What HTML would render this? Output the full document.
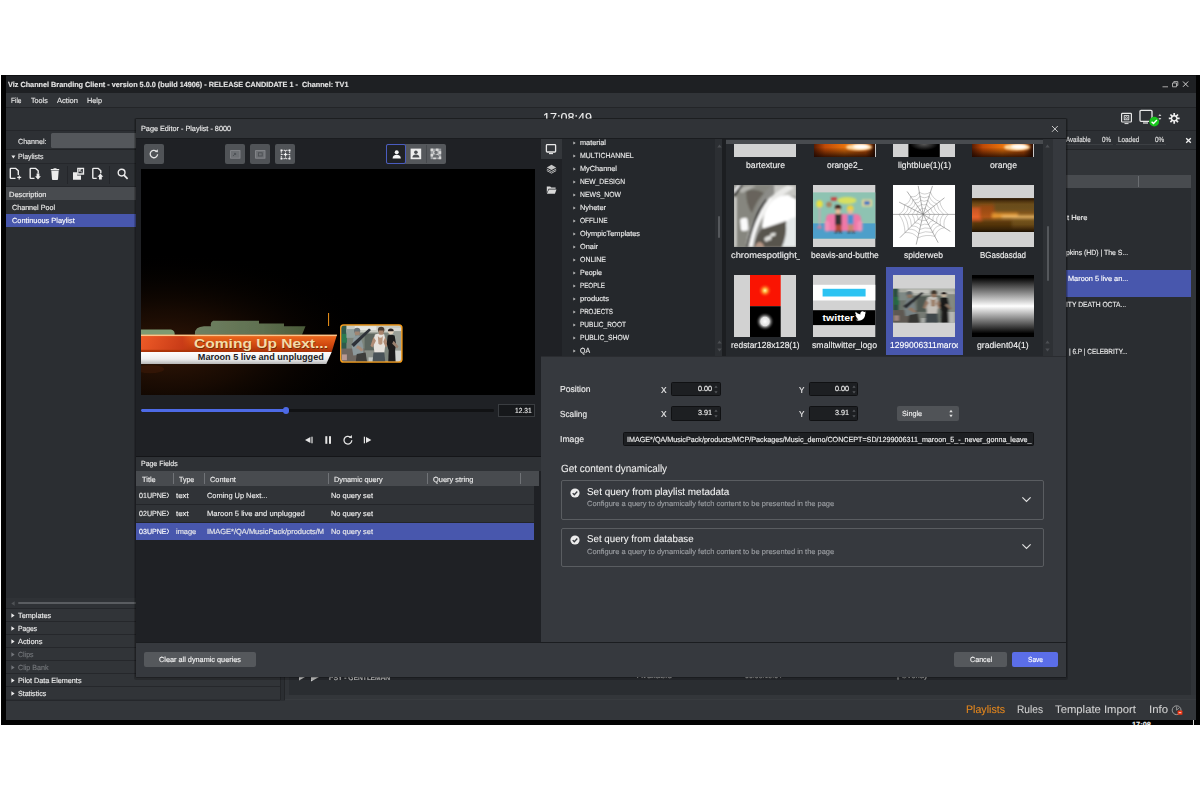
<!DOCTYPE html>
<html><head><meta charset="utf-8"><title>Page Editor</title>
<style>
*{box-sizing:border-box;margin:0;padding:0}
html,body{width:1200px;height:800px;overflow:hidden;background:#fff}
body{font-family:"Liberation Sans",sans-serif;font-size:7.4px;color:#e6e6e6;position:relative}
.a{position:absolute}
.t{position:absolute;white-space:nowrap;line-height:14px;height:14px;transform-origin:0 50%;-webkit-text-stroke:0.13px currentColor;text-rendering:geometricPrecision}
.c{position:absolute;overflow:hidden}
svg{position:absolute;overflow:hidden}
</style></head><body>
<div class="a" style="left:1px;top:75px;width:1199px;height:649.5px;background:#020202;"></div>
<div class="a" style="left:6px;top:75px;width:1190px;height:645px;background:#2b2e32;"></div>
<div class="a" style="left:6px;top:75px;width:1190px;height:18.3px;background:#1e2023;"></div>
<div class="a" style="left:6px;top:75px;width:1190px;height:0.8px;background:#101113;"></div>
<span class="t" style="left:8.3px;top:77.8px;font-size:7.4px;color:#e4e4e4;font-weight:bold;transform:scaleX(0.9842);white-space:pre;">Viz Channel Branding Client - version 5.0.0 (build 14906) - RELEASE CANDIDATE 1 -  Channel: TV1</span>
<svg style="left:1160px;top:79px" width="32" height="10" viewBox="0 0 32 10"><g fill="none" stroke="#b8b8b8" stroke-width="0.9"><path d="M2.5 7.8h5.5"/><path d="M12.5 4h4v3.8h-4z M13.8 4V2.6h4v3.8h-1.3"/><path d="M23 2.5l5.2 5.3M28.2 2.5L23 7.8" stroke="#d0d0d0" stroke-width="1"/></g></svg>
<div class="a" style="left:6px;top:93.3px;width:1190px;height:14.0px;background:#313438;"></div>
<span class="t" style="left:10.5px;top:94.25px;font-size:7.4px;color:#e6e6e6;transform:scaleX(0.8807);">File</span>
<span class="t" style="left:30.75px;top:94.25px;font-size:7.4px;color:#e6e6e6;transform:scaleX(0.9701);">Tools</span>
<span class="t" style="left:56.75px;top:94.25px;font-size:7.4px;color:#e6e6e6;transform:scaleX(1.0221);">Action</span>
<span class="t" style="left:87px;top:94.25px;font-size:7.4px;color:#e6e6e6;transform:scaleX(0.9866);">Help</span>
<div class="a" style="left:6px;top:107.3px;width:1190px;height:0.8px;background:#232528;"></div>
<div class="a" style="left:6px;top:108.1px;width:1190px;height:22.7px;background:#2d3034;"></div>
<span class="t" style="left:543px;top:110.7px;font-size:13px;color:#f0f0f0;-webkit-text-stroke:0.08px currentColor;transform:scaleX(0.9682);">17:08:49</span>
<svg style="left:1119px;top:109px" width="64" height="18" viewBox="0 0 64 18"><g fill="none" stroke="#e8e8e8" stroke-width="1.2"><rect x="2.6" y="4.4" width="9.8" height="8.6" rx="0.8"/><rect x="5.2" y="6.6" width="4.6" height="4.2" stroke-width="0.9"/><circle cx="7.5" cy="8.7" r="1" stroke-width="0.8"/><path d="M5.5 14.6h4" stroke-width="1"/></g><g fill="none" stroke="#e8e8e8" stroke-width="1.3"><path d="M33 10.5V2.3a1 1 0 0 0-1-1H22a1 1 0 0 0-1 1v9a1 1 0 0 0 1 1h8"/><path d="M24 14h5" stroke-width="1.2"/></g><circle cx="35.2" cy="12.6" r="4.9" fill="#17c41c"/><path d="M32.6 12.7l1.9 1.9 3.4-3.6" fill="none" stroke="#fff" stroke-width="1.4"/><path d="M39.4 7l1.5-2 1.5 2z M39.4 9l1.5 2 1.5-2z" fill="#c8c8c8"/><g transform="translate(55.2 9.3)"><g stroke="#f0f0f0" stroke-width="1.7"><path d="M0-5.4V5.4M-5.4 0H5.4M-3.8-3.8L3.8 3.8M-3.8 3.8L3.8-3.8"/></g><circle r="3.3" fill="#f0f0f0"/><circle r="1.9" fill="#2d3034"/></g></svg>
<div class="a" style="left:6px;top:130.8px;width:1190px;height:18.5px;background:#2d3034;"></div>
<div class="a" style="left:6px;top:130.4px;width:1190px;height:0.8px;background:#24262a;"></div>
<span class="t" style="left:17.5px;top:134.5px;font-size:7.4px;color:#e6e6e6;transform:scaleX(0.9630);">Channel:</span>
<div class="a" style="left:51px;top:133px;width:233px;height:14.8px;background:#54575b;border-radius:1.5px;"></div>
<div class="a" style="left:1060px;top:144.2px;width:53px;height:0.8px;background:#3c3f43;"></div>
<div class="a" style="left:1116px;top:144.2px;width:50px;height:0.8px;background:#3c3f43;"></div>
<span class="t" style="left:1066.3px;top:132.5px;font-size:7.4px;color:#e0e0e0;transform:scaleX(0.8272);">Available</span>
<span class="t" style="left:1102px;top:132.8px;font-size:7.4px;color:#e0e0e0;transform:scaleX(0.8421);">0%</span>
<span class="t" style="left:1117.5px;top:132.5px;font-size:7.4px;color:#e0e0e0;transform:scaleX(0.8593);">Loaded</span>
<span class="t" style="left:1154.7px;top:132.8px;font-size:7.4px;color:#e0e0e0;transform:scaleX(0.8702);">0%</span>
<svg style="left:1185px;top:137px" width="7" height="7" viewBox="0 0 7 7"><path d="M1.2 1.2l4.6 4.6M5.8 1.2L1.2 5.8" stroke="#f0f0f0" stroke-width="1.3" fill="none"/></svg>
<div class="a" style="left:6px;top:149.3px;width:1190px;height:0.8px;background:#222427;"></div>
<div class="a" style="left:6px;top:150.1px;width:274px;height:13.3px;background:#2f3236;"></div>
<svg style="left:10.5px;top:154.5px" width="5" height="4" viewBox="0 0 5 4"><path d="M0.4 0.6h4L2.4 3.6z" fill="#e8e8e8"/></svg>
<span class="t" style="left:17.5px;top:150.25px;font-size:7.4px;color:#e6e6e6;transform:scaleX(0.9406);">Playlists</span>
<div class="a" style="left:6px;top:163.4px;width:274px;height:0.8px;background:#25272b;"></div>
<div class="a" style="left:6px;top:164.2px;width:274px;height:21.4px;background:#2d3034;"></div>
<svg style="left:8px;top:166.400px" width="126" height="16" viewBox="0 0 126 16">
<g fill="none" stroke="#ececec" stroke-width="1.4" stroke-linejoin="round">
<path d="M10.3 9V4.8L7.8 2.4H3a.7.7 0 0 0-.7.7v8.6a.7.7 0 0 0 .7.7h4.5"/>
<path d="M30.2 7.5V4.8L27.7 2.4H22.9a.7.7 0 0 0-.7.7v8.6a.7.7 0 0 0 .7.7h3.6"/>
<path d="M92.8 7.2V4.8L90.3 2.4H85.5a.7.7 0 0 0-.7.7v8.6a.7.7 0 0 0 .7.7h3.2"/>
</g>
<path d="M10.6 9.4v1.4H9.2v1.2h1.4v1.4h1.2V12h1.4v-1.2h-1.4V9.4z" fill="#ececec"/>
<path d="M28.6 7.6h2.8v2.7h1.5l-2.9 3.2-2.9-3.2h1.5z" fill="#ececec"/>
<path d="M91 13.4h2.8v-2.7h1.5l-2.9-3.2-2.9 3.2H91z" fill="#ececec"/>
<path d="M43.300 4.800h7.400l-.7 8.400a.8.8 0 0 1-.8.700h-4.400a.8.800 0 0 1-.8-.700z M42.800 3.100h8.400v1.100h-8.400z M45.500 2.300h3v1h-3z" fill="#ececec"/>
<path d="M65 6.2h4.2v3.3H73v4.2h-8z" fill="#ececec"/>
<path d="M69.8 2.3h5.7v5.7h-5.7z" fill="none" stroke="#ececec" stroke-width="1.3"/>
<path d="M71.2 3.7h2.2M71.2 3.7v2.2M71.2 3.7l2.9 2.9" stroke="#ececec" stroke-width="0.9" fill="none"/>
<circle cx="113.6" cy="6.6" r="3.4" fill="none" stroke="#ececec" stroke-width="1.4"/><path d="M116 9.2l3.6 3.7" stroke="#ececec" stroke-width="1.7" fill="none"/>
</svg>
<div class="a" style="left:66.5px;top:165.5px;width:0.7px;height:18.5px;background:#24262a;"></div>
<div class="a" style="left:109px;top:165.5px;width:0.7px;height:18.5px;background:#24262a;"></div>
<div class="a" style="left:6px;top:185.6px;width:274px;height:1.0px;background:#25272b;"></div>
<div class="a" style="left:6px;top:186.6px;width:274px;height:13.4px;background:#484b4f;"></div>
<span class="t" style="left:8.5px;top:187.5px;font-size:7.4px;color:#ececec;transform:scaleX(1.0144);">Description</span>
<div class="a" style="left:6px;top:200px;width:274px;height:13.7px;background:#2d3034;"></div>
<span class="t" style="left:12px;top:201.0px;font-size:7.4px;color:#ececec;transform:scaleX(0.9687);">Channel Pool</span>
<div class="a" style="left:6px;top:214px;width:274px;height:12.6px;background:#4857ad;"></div>
<span class="t" style="left:12px;top:214.1px;font-size:7.4px;color:#ffffff;transform:scaleX(0.9975);">Continuous Playlist</span>
<div class="a" style="left:6px;top:226.6px;width:274px;height:371.4px;background:#2b2e32;"></div>
<div class="a" style="left:6px;top:598px;width:274px;height:9.5px;background:#2f3236;"></div>
<svg style="left:10.5px;top:600.5px" width="4" height="5" viewBox="0 0 4 5"><path d="M3.6 0.3v4.4L0.3 2.5z" fill="#505357"/></svg>
<div class="a" style="left:18px;top:601.8px;width:252px;height:2.2px;background:#5a5d61;border-radius:1px;"></div>
<div class="a" style="left:6px;top:607.6px;width:274px;height:1.0px;background:#25272b;"></div>
<div class="a" style="left:6px;top:608.6px;width:274px;height:12.1px;background:#313438;"></div>
<svg style="left:10.6px;top:612.6px" width="4" height="5" viewBox="0 0 4 5"><path d="M0.4 0.3v4.4l3.2-2.2z" fill="#ececec"/></svg>
<span class="t" style="left:17.5px;top:608.5px;font-size:7.4px;color:#ececec;transform:scaleX(0.9870);">Templates</span>
<div class="a" style="left:6px;top:620.62px;width:274px;height:1.0px;background:#25272b;"></div>
<div class="a" style="left:6px;top:621.62px;width:274px;height:12.1px;background:#313438;"></div>
<svg style="left:10.6px;top:625.6px" width="4" height="5" viewBox="0 0 4 5"><path d="M0.4 0.3v4.4l3.2-2.2z" fill="#ececec"/></svg>
<span class="t" style="left:17.5px;top:621.5px;font-size:7.4px;color:#ececec;transform:scaleX(0.9180);">Pages</span>
<div class="a" style="left:6px;top:633.64px;width:274px;height:1.0px;background:#25272b;"></div>
<div class="a" style="left:6px;top:634.64px;width:274px;height:12.1px;background:#313438;"></div>
<svg style="left:10.6px;top:638.6px" width="4" height="5" viewBox="0 0 4 5"><path d="M0.4 0.3v4.4l3.2-2.2z" fill="#ececec"/></svg>
<span class="t" style="left:17.5px;top:634.5px;font-size:7.4px;color:#ececec;transform:scaleX(1.0103);">Actions</span>
<div class="a" style="left:6px;top:646.6600000000001px;width:274px;height:1.0px;background:#25272b;"></div>
<div class="a" style="left:6px;top:647.6600000000001px;width:274px;height:12.1px;background:#313438;"></div>
<svg style="left:10.6px;top:651.6px" width="4" height="5" viewBox="0 0 4 5"><path d="M0.4 0.3v4.4l3.2-2.2z" fill="#74777b"/></svg>
<span class="t" style="left:17.5px;top:647.5px;font-size:7.4px;color:#74777b;transform:scaleX(0.9430);">Clips</span>
<div class="a" style="left:6px;top:659.6800000000001px;width:274px;height:1.0px;background:#25272b;"></div>
<div class="a" style="left:6px;top:660.6800000000001px;width:274px;height:12.1px;background:#313438;"></div>
<svg style="left:10.6px;top:664.6px" width="4" height="5" viewBox="0 0 4 5"><path d="M0.4 0.3v4.4l3.2-2.2z" fill="#74777b"/></svg>
<span class="t" style="left:17.5px;top:660.5px;font-size:7.4px;color:#74777b;transform:scaleX(0.9640);">Clip Bank</span>
<div class="a" style="left:6px;top:672.7px;width:274px;height:1.0px;background:#25272b;"></div>
<div class="a" style="left:6px;top:673.7px;width:274px;height:12.1px;background:#313438;"></div>
<svg style="left:10.6px;top:677.6px" width="4" height="5" viewBox="0 0 4 5"><path d="M0.4 0.3v4.4l3.2-2.2z" fill="#ececec"/></svg>
<span class="t" style="left:17.5px;top:673.5px;font-size:7.4px;color:#ececec;transform:scaleX(0.9783);">Pilot Data Elements</span>
<div class="a" style="left:6px;top:685.72px;width:274px;height:1.0px;background:#25272b;"></div>
<div class="a" style="left:6px;top:686.72px;width:274px;height:12.1px;background:#313438;"></div>
<svg style="left:10.6px;top:690.6px" width="4" height="5" viewBox="0 0 4 5"><path d="M0.4 0.3v4.4l3.2-2.2z" fill="#ececec"/></svg>
<span class="t" style="left:17.5px;top:686.5px;font-size:7.4px;color:#ececec;transform:scaleX(0.9551);">Statistics</span>
<div class="a" style="left:6px;top:699.8px;width:274px;height:0.8px;background:#25272b;"></div>
<div class="a" style="left:280px;top:150.1px;width:1px;height:549.9px;background:#232528;"></div>
<div class="a" style="left:284px;top:150.1px;width:1px;height:549.9px;background:#232528;"></div>
<div class="a" style="left:285px;top:150.1px;width:911px;height:544.9px;background:#313438;"></div>
<div class="a" style="left:289px;top:174.5px;width:901.5px;height:520.3px;background:#2a2d31;"></div>
<div class="a" style="left:289px;top:174.5px;width:901.5px;height:13.5px;background:#484b4f;"></div>
<div class="a" style="left:1137.6px;top:176px;width:1.0px;height:11px;background:#6a6d71;"></div>
<div class="a" style="left:1066px;top:270px;width:124.5px;height:26.6px;background:#4857ad;"></div>
<span class="t" style="left:1066.5px;top:210.5px;font-size:7.4px;color:#ececec;transform:scaleX(1.0178);">t Here</span>
<span class="t" style="left:1066.3px;top:245.5px;font-size:7.4px;color:#ececec;transform:scaleX(0.9327);">pkins (HD) | The S...</span>
<span class="t" style="left:1067.6px;top:271.5px;font-size:7.4px;color:#ffffff;transform:scaleX(0.9932);">Maroon 5 live an...</span>
<span class="t" style="left:1066.3px;top:297.5px;font-size:7.4px;color:#ececec;transform:scaleX(0.9104);">ITY DEATH OCTA...</span>
<span class="t" style="left:1068.5px;top:344.5px;font-size:7.4px;color:#ececec;transform:scaleX(0.8699);">| 6.P | CELEBRITY...</span>
<svg style="left:298px;top:672px" width="24" height="10" viewBox="0 0 24 10"><path d="M1 1.5v7l6-3.5z M13 0.5v9l8-4.5z" fill="#d0d0d0"/></svg>
<span class="t" style="left:329px;top:670.5px;font-size:7.4px;color:#e0e0e0;transform:scaleX(0.9075);">PSY - GENTLEMAN</span>
<span class="t" style="left:637px;top:669.0px;font-size:7.4px;color:#c8c8c8;transform:scaleX(1.1722);">Available</span>
<span class="t" style="left:745px;top:669.0px;font-size:7.4px;color:#c8c8c8;transform:scaleX(0.9476);">00:03:15:04</span>
<span class="t" style="left:897px;top:669.0px;font-size:7.4px;color:#c8c8c8;transform:scaleX(1.0531);">| Overlay</span>
<div class="a" style="left:285px;top:695px;width:911px;height:25px;background:#33363a;"></div>
<div class="a" style="left:6px;top:700.6px;width:279px;height:19.4px;background:#33363a;"></div>
<div class="a" style="left:285px;top:699px;width:911px;height:0.8px;background:#383b3f;"></div>
<span class="t" style="left:966px;top:702.5px;font-size:11px;color:#e5871d;-webkit-text-stroke:0.08px currentColor;transform:scaleX(0.9667);">Playlists</span>
<span class="t" style="left:1017px;top:702.5px;font-size:11px;color:#d0d0d0;-webkit-text-stroke:0.08px currentColor;transform:scaleX(0.9244);">Rules</span>
<span class="t" style="left:1055px;top:702.5px;font-size:11px;color:#d0d0d0;-webkit-text-stroke:0.08px currentColor;transform:scaleX(1.0269);">Template Import</span>
<span class="t" style="left:1149px;top:702.5px;font-size:11px;color:#d0d0d0;-webkit-text-stroke:0.08px currentColor;transform:scaleX(1.0349);">Info</span>
<svg style="left:1170.5px;top:703.5px" width="13" height="13" viewBox="0 0 13 13"><circle cx="5.6" cy="6.2" r="4.4" fill="none" stroke="#a8a8a8" stroke-width="0.9"/><path d="M5.6 6.2V2.4M5.6 6.2l2.6-2.4" stroke="#a8a8a8" stroke-width="0.8" fill="none"/><rect x="6.6" y="6.6" width="4.8" height="4.2" rx="0.6" fill="#ee3311"/><path d="M7.7 8.7h2.6" stroke="#fff" stroke-width="0.8"/></svg>
<div class="a" style="left:1193.2px;top:720px;width:0.8px;height:4.5px;background:#d8d8d8;"></div>
<div class="c" style="left:1124px;top:720px;width:40px;height:4.5px"><span class="t" style="left:8px;top:-2.5px;font-size:7.4px;font-weight:bold;color:#f0f0f0">17:08</span></div>
<div class="a" style="left:134px;top:117.5px;width:934px;height:562.0px;background:rgba(0,0,0,0.18);border-radius:2px;"></div>
<div class="a" style="left:135px;top:118.3px;width:932px;height:560.0px;background:rgba(0,0,0,0.22);border-radius:2px;"></div>
<div class="a" style="left:136px;top:119px;width:930px;height:558px;background:#36393e;"></div>
<div class="a" style="left:136px;top:119px;width:930px;height:19px;background:#303337;"></div>
<span class="t" style="left:141px;top:121.5px;font-size:7.4px;color:#ececec;transform:scaleX(0.9824);">Page Editor - Playlist - 8000</span>
<svg style="left:1050px;top:124px" width="10" height="10" viewBox="0 0 10 10"><path d="M2 2l5.8 5.8M7.8 2L2 7.8" stroke="#d8d8d8" stroke-width="0.9" fill="none"/></svg>
<div class="a" style="left:136px;top:138px;width:930px;height:1px;background:#1a1c1f;"></div>
<div class="a" style="left:136px;top:139px;width:405px;height:503px;background:#1f2125;"></div>
<div class="a" style="left:143.5px;top:144px;width:20.0px;height:20px;background:#505357;border-radius:2px;"></div>
<svg style="left:147.5px;top:148px" width="12" height="12" viewBox="0 0 12 12"><path d="M9.6 6.2A3.7 3.7 0 1 1 8.3 3.2" fill="none" stroke="#e4e4e4" stroke-width="1.3"/><path d="M6.8 3.9L9.9 4.3L9.7 1.2z" fill="#e4e4e4"/></svg>
<div class="a" style="left:225.2px;top:144px;width:20.0px;height:20px;background:#505357;border-radius:2px;"></div>
<div class="a" style="left:250px;top:144px;width:20px;height:20px;background:#505357;border-radius:2px;"></div>
<div class="a" style="left:275px;top:144px;width:20px;height:20px;background:#505357;border-radius:2px;"></div>
<svg style="left:230px;top:149.5px" width="11" height="9" viewBox="0 0 11 9"><rect x="0.6" y="0.6" width="9.4" height="7.6" fill="#6d7074" stroke="#8a8d91" stroke-width="0.8"/><path d="M3 6l2.2-2.3M4 3.4h1.6v1.6" stroke="#4b4e52" stroke-width="0.9" fill="none"/></svg>
<svg style="left:254.8px;top:149.5px" width="11" height="9" viewBox="0 0 11 9"><rect x="0.6" y="0.6" width="9.4" height="7.6" fill="#6d7074" stroke="#8a8d91" stroke-width="0.8"/><rect x="3.4" y="2.8" width="3.8" height="3.2" fill="none" stroke="#4b4e52" stroke-width="0.9"/></svg>
<svg style="left:279.6px;top:148.6px" width="11" height="11" viewBox="0 0 11 11"><g stroke="#f2f2f2" stroke-width="1" fill="none" stroke-dasharray="1.4 1"><path d="M1.3 1.3h8.4v8.4H1.3z"/><path d="M1.3 5.5h8.4M5.5 1.3v8.4"/></g><g fill="#f2f2f2"><rect x="0.5" y="0.5" width="1.8" height="1.8"/><rect x="8.7" y="0.5" width="1.8" height="1.8"/><rect x="0.5" y="8.7" width="1.8" height="1.8"/><rect x="8.7" y="8.7" width="1.8" height="1.8"/><rect x="4.6" y="4.6" width="1.8" height="1.8"/></g></svg>
<div class="a" style="left:386px;top:144px;width:59.5px;height:20px;background:#55585c;border-radius:2px;"></div>
<div class="a" style="left:386px;top:144px;width:20.2px;height:20px;background:#1f2125;border:1px solid #4a5cc0;border-radius:2px;"></div>
<div class="a" style="left:425.6px;top:145px;width:0.6px;height:18px;background:#46494d;"></div>
<svg style="left:390.5px;top:148.5px" width="12" height="11" viewBox="0 0 12 11"><circle cx="5.7" cy="3.2" r="2" fill="#f4f4f4"/><path d="M1.6 9.6c0-2.6 1.6-3.8 4.1-3.8s4.1 1.2 4.1 3.8z" fill="#f4f4f4"/></svg>
<svg style="left:410px;top:148px" width="12" height="12" viewBox="0 0 12 12"><rect x="0.6" y="0.6" width="10.6" height="10.6" fill="#ececec"/><circle cx="5.9" cy="4.2" r="1.8" fill="#4a4d51"/><path d="M2.4 9.6c0-2.2 1.4-3.2 3.5-3.2s3.5 1 3.5 3.2z" fill="#4a4d51"/></svg>
<svg style="left:430px;top:148px" width="12" height="12" viewBox="0 0 12 12"><rect x="0.6" y="0.6" width="10.6" height="10.6" fill="#9a9da1"/><g fill="#d8d8d8"><rect x="0.6" y="0.6" width="2.6" height="2.6"/><rect x="5.9" y="0.6" width="2.6" height="2.6"/><rect x="3.2" y="3.2" width="2.7" height="2.7"/><rect x="8.5" y="3.2" width="2.7" height="2.7"/><rect x="0.6" y="5.9" width="2.6" height="2.6"/><rect x="5.9" y="5.9" width="2.6" height="2.6"/><rect x="3.2" y="8.5" width="2.7" height="2.7"/><rect x="8.5" y="8.5" width="2.7" height="2.7"/></g><circle cx="5.9" cy="4.4" r="1.6" fill="#6a6d71"/><path d="M2.8 9.4c0-2 1.2-2.8 3.1-2.8s3.1.8 3.1 2.8z" fill="#6a6d71"/></svg>
<div class="a" style="left:141px;top:168.8px;width:394px;height:226.2px;background:#000;"></div>
<svg style="left:141px;top:168.8px" width="394" height="226.2" viewBox="141 168.8 394 226.2">
<defs>
<radialGradient id="vg1" gradientUnits="userSpaceOnUse" cx="165" cy="350" r="215" gradientTransform="translate(0 350) scale(1 0.46) translate(0 -350)"><stop offset="0" stop-color="#3a1a08" stop-opacity="0.9"/><stop offset="0.4" stop-color="#241004" stop-opacity="0.65"/><stop offset="1" stop-color="#000" stop-opacity="0"/></radialGradient>
<linearGradient id="vob" x1="0" y1="0" x2="0" y2="1"><stop offset="0" stop-color="#f7a257"/><stop offset="0.12" stop-color="#e8641c"/><stop offset="0.55" stop-color="#d24a10"/><stop offset="1" stop-color="#a83208"/></linearGradient>
<linearGradient id="vobl" x1="0" y1="0" x2="1" y2="0"><stop offset="0" stop-color="#ee5a28"/><stop offset="0.75" stop-color="#c83a18"/><stop offset="1" stop-color="#c83a18" stop-opacity="0"/></linearGradient>
<linearGradient id="vwb" x1="0" y1="0" x2="0" y2="1"><stop offset="0" stop-color="#ffffff"/><stop offset="0.6" stop-color="#eeeeee"/><stop offset="1" stop-color="#b8b8b8"/></linearGradient>
<linearGradient id="vgr" x1="0" y1="0" x2="1" y2="0"><stop offset="0" stop-color="#6f8062"/><stop offset="0.6" stop-color="#5f7050"/><stop offset="1" stop-color="#4a5a38"/></linearGradient>
<linearGradient id="vph" x1="0" y1="0" x2="0" y2="1"><stop offset="0" stop-color="#a9aea4"/><stop offset="0.25" stop-color="#8f978c"/><stop offset="0.7" stop-color="#6f766c"/><stop offset="1" stop-color="#868a80"/></linearGradient>
<clipPath id="vpc"><rect x="341.500" y="325.500" width="59.600" height="35.600" rx="2.200"/></clipPath>
<filter id="vbl" x="-10%" y="-10%" width="120%" height="120%"><feGaussianBlur stdDeviation="0.7"/></filter>
</defs>
<rect x="141" y="168.8" width="394" height="226.2" fill="#000"/>
<rect x="141" y="168.8" width="394" height="226.2" fill="url(#vg1)"/>
<ellipse cx="150" cy="369" rx="14" ry="4" fill="#6a2a08" opacity="0.22" filter="url(#vbl)"/>
<g filter="url(#vbl)">
<path d="M213 320.6h46v2.6h25v2.8h21.5l-3.5 8.6H195q-1-8 9-8.6h7q-1-4 2-5.400z" fill="url(#vgr)"/>
<path d="M141 329.2h30q4.500 1 3.500 6H141z" fill="#7d9a72"/>
</g>
<path d="M141 334.6H337l-5.300 17.300H141z" fill="url(#vob)"/>
<path d="M141 336H196v13.500H141z" fill="url(#vobl)" opacity="0.9"/>
<path d="M141 334.600H337l-0.400 1.200H141z" fill="#fbc48a"/>
<path d="M141 351.800H331.700l-5.400 11.900H141z" fill="url(#vwb)"/>
<rect x="328" y="312.800" width="1.100" height="13" fill="#e08a18"/>
<rect x="340" y="324" width="62.600" height="38.600" rx="3.600" fill="#f59c1c"/>
<g clip-path="url(#vpc)"><g transform="translate(341 325) scale(0.984 0.974)"><g>
<rect width="62" height="38" fill="#7d857c"/>
<g filter="url(#vbl)">
<rect x="0" y="0" width="62" height="7.5" fill="#c9ccc4"/>
<rect x="14" y="1" width="22" height="4" fill="#e6e6e0"/>
<rect x="0" y="0" width="5.5" height="26" fill="#2f5a4c"/>
<rect x="1" y="9" width="5" height="9" fill="#2c7a50"/>
<rect x="5.5" y="4" width="9" height="9" fill="#93a09c"/>
<rect x="0" y="24" width="24" height="14" fill="#6d6660"/>
<rect x="1" y="30" width="5" height="6" fill="#b89a94"/>
<rect x="24" y="9" width="12" height="17" fill="#5c665e"/>
<rect x="24" y="26" width="14" height="12" fill="#8a8f88"/>
<rect x="50" y="6" width="12" height="20" fill="#9aa098"/>
<rect x="46" y="3" width="16" height="3" fill="#d8d8d2"/>
<rect x="52" y="26" width="10" height="12" fill="#d4d6d2"/>
<rect x="28" y="33" width="12" height="5" fill="#c4c8c4"/>
<path d="M13 12.500q3-3.500 6.500-1.500l2.500 8 1 9-2 2-8.500 1-1.500-9z" fill="#8c999c"/>
<circle cx="16.400" cy="5.800" r="3.200" fill="#6c7478"/>
<path d="M14 6.500h5v3q-2.500 1.500-5 0z" fill="#a08672"/>
<path d="M16 29.500l9-1.500 1.500 10H15z" fill="#3c3c3a"/>
<path d="M10.500 19.500L28.500 3.500l2 1.500L13 22.500z" fill="#2e3238"/>
<path d="M17 20.500q3 1 6 5l-2.500 1.500q-3-3-5.500-3.500z" fill="#a88c78"/>
<path d="M34.500 9.500q5.500-2 9.500 0l1.500 7-1.500 11.500h-10l-1.500-11z" fill="#e6e2dc"/>
<path d="M37.500 11q2.500 4 5 0l-.5 8q-2 2-4 0z" fill="#b8957c"/>
<circle cx="40.800" cy="4.800" r="3.300" fill="#4a3c32"/>
<path d="M38.300 5.500h5v3.500q-2.500 1.800-5 0z" fill="#a8846c"/>
<path d="M33 12l-3 9 2 2 3.500-7z M45 12l3 8-2.500 3-2.500-6z" fill="#b08c74"/>
<path d="M33 28h11l1 10H32z" fill="#4a5258"/>
<path d="M47.500 10.500q3.500-1.500 7 0l1.500 9-1 6 .5 12.500h-7.500l.5-12-2-7z" fill="#1a1b1d"/>
<circle cx="50.600" cy="6.600" r="2.900" fill="#e4d2bc"/>
<path d="M47.600 5q3-3 6 0l-.3 1.200h-5.400z" fill="#2a2420"/>
<path d="M53.500 16l5 6-1.500 2-5-5z" fill="#9a8270"/>
</g></g></g></g>
<text x="194" y="348.300" font-family="Liberation Sans, sans-serif" font-weight="bold" font-size="13.700" fill="#5a2a0a" opacity="0.8" textLength="134" lengthAdjust="spacingAndGlyphs" transform="translate(0.700 0.800)">Coming Up Next...</text>
<text x="194" y="348.300" font-family="Liberation Sans, sans-serif" font-weight="bold" font-size="13.700" fill="#f3dca8" textLength="134" lengthAdjust="spacingAndGlyphs">Coming Up Next...</text>
<text x="197.800" y="360.200" font-family="Liberation Sans, sans-serif" font-weight="bold" font-size="9" fill="#222226" textLength="126" lengthAdjust="spacingAndGlyphs">Maroon 5 live and unplugged</text>
</svg>
<div class="a" style="left:141px;top:409.3px;width:353px;height:2.6px;background:#111214;border-radius:1.3px;"></div>
<div class="a" style="left:141px;top:409.2px;width:145px;height:2.8px;background:#4d6ae6;border-radius:1.4px;"></div>
<div class="a" style="left:282.6px;top:407.2px;width:6.8px;height:6.8px;background:#4d6ae6;border-radius:50%;"></div>
<div class="a" style="left:498px;top:403.5px;width:37px;height:13.5px;background:#16181b;border:1px solid #3a3d41;"></div>
<span class="t" style="left:515px;top:403.5px;font-size:7.4px;color:#ececec;transform:scaleX(0.8973);">12.31</span>
<svg style="left:300px;top:434px" width="76" height="12" viewBox="0 0 76 12"><g fill="#e4e4e4"><path d="M10.4 2.9v6.2L5 6z"/><rect x="11.4" y="2.7" width="1.2" height="6.6"/><rect x="25.3" y="2.2" width="2" height="7.6"/><rect x="29" y="2.2" width="2" height="7.6"/><path d="M66 2.9v6.2L71.400 6z"/><rect x="63.800" y="2.7" width="1.2" height="6.6"/></g><path d="M51.8 6.3A3.9 3.9 0 1 1 50.4 3.2" fill="none" stroke="#e4e4e4" stroke-width="1.3"/><path d="M48.9 3.8L52 4.3L51.8 1.1z" fill="#e4e4e4"/></svg>
<div class="a" style="left:136px;top:455.7px;width:405px;height:0.8px;background:#141518;"></div>
<div class="a" style="left:136px;top:456.5px;width:405px;height:14.5px;background:#2e3135;"></div>
<span class="t" style="left:141px;top:456.5px;font-size:7.4px;color:#ececec;transform:scaleX(0.9403);">Page Fields</span>
<div class="a" style="left:136px;top:471px;width:403.3px;height:14.6px;background:#484b4f;"></div>
<div class="a" style="left:172.8px;top:473px;width:0.9px;height:10.5px;background:#707377;"></div>
<div class="a" style="left:204px;top:473px;width:0.9px;height:10.5px;background:#707377;"></div>
<div class="a" style="left:328px;top:473px;width:0.9px;height:10.5px;background:#707377;"></div>
<div class="a" style="left:427px;top:473px;width:0.9px;height:10.5px;background:#707377;"></div>
<div class="a" style="left:520px;top:473px;width:0.9px;height:10.5px;background:#707377;"></div>
<span class="t" style="left:141.8px;top:472.5px;font-size:7.4px;color:#ececec;transform:scaleX(1.0009);">Title</span>
<span class="t" style="left:178.7px;top:472.5px;font-size:7.4px;color:#ececec;transform:scaleX(0.9544);">Type</span>
<span class="t" style="left:210px;top:472.5px;font-size:7.4px;color:#ececec;transform:scaleX(0.9965);">Content</span>
<span class="t" style="left:334px;top:472.5px;font-size:7.4px;color:#ececec;transform:scaleX(0.9879);">Dynamic query</span>
<span class="t" style="left:432.5px;top:472.5px;font-size:7.4px;color:#ececec;transform:scaleX(1.0058);">Query string</span>
<div class="a" style="left:136px;top:485.6px;width:398px;height:18.4px;background:#303337;"></div>
<div class="a" style="left:136px;top:504px;width:398px;height:18.2px;background:#303337;"></div>
<div class="a" style="left:136px;top:503.6px;width:398px;height:0.8px;background:#232529;"></div>
<div class="a" style="left:136px;top:521.8px;width:398px;height:0.8px;background:#232529;"></div>
<div class="a" style="left:136px;top:522.6px;width:398px;height:17.6px;background:#4857ad;"></div>
<div class="c" style="left:139px;top:488.9px;width:29.6px;height:14px"><span class="t" style="left:0.4px;top:0;font-size:7.4px;color:#ececec;transform:scaleX(0.9580);">01UPNEXT</span></div>
<span class="t" style="left:176.3px;top:488.9px;font-size:7.4px;color:#ececec;transform:scaleX(1.0653);">text</span>
<span class="t" style="left:207px;top:488.9px;font-size:7.4px;color:#ececec;transform:scaleX(1.0018);">Coming Up Next...</span>
<span class="t" style="left:331.4px;top:488.9px;font-size:7.4px;color:#ececec;transform:scaleX(1.0022);">No query set</span>
<div class="c" style="left:139px;top:506.85px;width:29.6px;height:14px"><span class="t" style="left:0.4px;top:0;font-size:7.4px;color:#ececec;transform:scaleX(0.9580);">02UPNEXT</span></div>
<span class="t" style="left:176.3px;top:506.85px;font-size:7.4px;color:#ececec;transform:scaleX(1.0653);">text</span>
<span class="t" style="left:207px;top:506.85px;font-size:7.4px;color:#ececec;transform:scaleX(1.0259);">Maroon 5 live and unplugged</span>
<span class="t" style="left:331.4px;top:506.85px;font-size:7.4px;color:#ececec;transform:scaleX(1.0022);">No query set</span>
<div class="c" style="left:139px;top:524.8px;width:29.6px;height:14px"><span class="t" style="left:0.4px;top:0;font-size:7.4px;color:#ffffff;transform:scaleX(0.9580);">03UPNEXT</span></div>
<span class="t" style="left:176.3px;top:524.8px;font-size:7.4px;color:#ececec;transform:scaleX(1.0029);">image</span>
<span class="t" style="left:207px;top:524.8px;font-size:7.4px;color:#ececec;transform:scaleX(1.0101);">IMAGE*/QA/MusicPack/products/M</span>
<span class="t" style="left:331.4px;top:524.8px;font-size:7.4px;color:#ececec;transform:scaleX(1.0022);">No query set</span>
<div class="a" style="left:541px;top:139px;width:20.5px;height:216.5px;background:#1f2125;"></div>
<div class="a" style="left:541px;top:139px;width:20.5px;height:19.5px;background:#34373b;"></div>
<svg style="left:545px;top:142.5px" width="12" height="12" viewBox="0 0 12 12"><rect x="1.4" y="1.6" width="9.2" height="7.4" rx="0.8" fill="none" stroke="#e8e8e8" stroke-width="1.3"/><path d="M4 10.6h4" stroke="#e8e8e8" stroke-width="1.1"/></svg>
<svg style="left:545.5px;top:164px" width="11" height="10" viewBox="0 0 11 10"><path d="M5.5 0.8L10.2 3.4L5.5 6L0.8 3.4z" fill="#c4c4c4"/><path d="M0.8 5l4.7 2.6L10.2 5M0.8 6.6l4.7 2.6 4.7-2.6" fill="none" stroke="#c4c4c4" stroke-width="0.9"/></svg>
<svg style="left:545.5px;top:184.5px" width="11" height="10" viewBox="0 0 11 10"><path d="M0.8 1.4h3.4l1 1.1h4.4v1.3H2.6L0.8 8z" fill="#d8d8d8"/><path d="M2.9 4.4h7.6L8.9 8.8H0.9z" fill="#d8d8d8"/></svg>
<div class="a" style="left:561.5px;top:139px;width:164.5px;height:216.5px;background:#25282c;"></div>
<div class="a" style="left:714.5px;top:139px;width:10.0px;height:216.5px;background:#2c2f33;"></div>
<div class="a" style="left:722.3px;top:139px;width:3.7px;height:216.5px;background:#1c1e21;"></div>
<div class="a" style="left:717.6px;top:216px;width:2.6px;height:21.5px;background:#55585c;border-radius:1.2px;"></div>
<svg style="left:716.8px;top:143.5px" width="5" height="4" viewBox="0 0 5 4"><path d="M2.5 0.4L4.7 3.6H0.3z" fill="#4c4f53"/></svg>
<svg style="left:716.8px;top:347.5px" width="5" height="4" viewBox="0 0 5 4"><path d="M2.5 3.6L4.7 0.4H0.3z" fill="#4c4f53"/></svg>
<svg style="left:573.2px;top:141.0px" width="3" height="4" viewBox="0 0 3 4"><path d="M0.3 0.4v3.2L2.7 2z" fill="#c0c0c0"/></svg>
<span class="t" style="left:580px;top:136.1px;font-size:7.4px;color:#ececec;transform:scaleX(0.9887);">material</span>
<svg style="left:573.2px;top:154.02px" width="3" height="4" viewBox="0 0 3 4"><path d="M0.3 0.4v3.2L2.7 2z" fill="#c0c0c0"/></svg>
<span class="t" style="left:580px;top:149.12px;font-size:7.4px;color:#ececec;transform:scaleX(0.9438);">MULTICHANNEL</span>
<svg style="left:573.2px;top:167.04px" width="3" height="4" viewBox="0 0 3 4"><path d="M0.3 0.4v3.2L2.7 2z" fill="#c0c0c0"/></svg>
<span class="t" style="left:580px;top:162.14px;font-size:7.4px;color:#ececec;transform:scaleX(0.9896);">MyChannel</span>
<svg style="left:573.2px;top:180.06px" width="3" height="4" viewBox="0 0 3 4"><path d="M0.3 0.4v3.2L2.7 2z" fill="#c0c0c0"/></svg>
<span class="t" style="left:580px;top:175.16px;font-size:7.4px;color:#ececec;transform:scaleX(0.9054);">NEW_DESIGN</span>
<svg style="left:573.2px;top:193.08px" width="3" height="4" viewBox="0 0 3 4"><path d="M0.3 0.4v3.2L2.7 2z" fill="#c0c0c0"/></svg>
<span class="t" style="left:580px;top:188.18px;font-size:7.4px;color:#ececec;transform:scaleX(0.9243);">NEWS_NOW</span>
<svg style="left:573.2px;top:206.1px" width="3" height="4" viewBox="0 0 3 4"><path d="M0.3 0.4v3.2L2.7 2z" fill="#c0c0c0"/></svg>
<span class="t" style="left:580px;top:201.2px;font-size:7.4px;color:#ececec;transform:scaleX(1.0042);">Nyheter</span>
<svg style="left:573.2px;top:219.12px" width="3" height="4" viewBox="0 0 3 4"><path d="M0.3 0.4v3.2L2.7 2z" fill="#c0c0c0"/></svg>
<span class="t" style="left:580px;top:214.22px;font-size:7.4px;color:#ececec;transform:scaleX(0.8809);">OFFLINE</span>
<svg style="left:573.2px;top:232.14px" width="3" height="4" viewBox="0 0 3 4"><path d="M0.3 0.4v3.2L2.7 2z" fill="#c0c0c0"/></svg>
<span class="t" style="left:580px;top:227.24px;font-size:7.4px;color:#ececec;transform:scaleX(0.9938);">OlympicTemplates</span>
<svg style="left:573.2px;top:245.16px" width="3" height="4" viewBox="0 0 3 4"><path d="M0.3 0.4v3.2L2.7 2z" fill="#c0c0c0"/></svg>
<span class="t" style="left:580px;top:240.26px;font-size:7.4px;color:#ececec;transform:scaleX(0.9957);">Onair</span>
<svg style="left:573.2px;top:258.18px" width="3" height="4" viewBox="0 0 3 4"><path d="M0.3 0.4v3.2L2.7 2z" fill="#c0c0c0"/></svg>
<span class="t" style="left:580px;top:253.28px;font-size:7.4px;color:#ececec;transform:scaleX(0.9444);">ONLINE</span>
<svg style="left:573.2px;top:271.2px" width="3" height="4" viewBox="0 0 3 4"><path d="M0.3 0.4v3.2L2.7 2z" fill="#c0c0c0"/></svg>
<span class="t" style="left:580px;top:266.3px;font-size:7.4px;color:#ececec;transform:scaleX(0.9559);">People</span>
<svg style="left:573.2px;top:284.22px" width="3" height="4" viewBox="0 0 3 4"><path d="M0.3 0.4v3.2L2.7 2z" fill="#c0c0c0"/></svg>
<span class="t" style="left:580px;top:279.32px;font-size:7.4px;color:#ececec;transform:scaleX(0.8452);">PEOPLE</span>
<svg style="left:573.2px;top:297.24px" width="3" height="4" viewBox="0 0 3 4"><path d="M0.3 0.4v3.2L2.7 2z" fill="#c0c0c0"/></svg>
<span class="t" style="left:580px;top:292.34px;font-size:7.4px;color:#ececec;transform:scaleX(1.0226);">products</span>
<svg style="left:573.2px;top:310.26px" width="3" height="4" viewBox="0 0 3 4"><path d="M0.3 0.4v3.2L2.7 2z" fill="#c0c0c0"/></svg>
<span class="t" style="left:580px;top:305.36px;font-size:7.4px;color:#ececec;transform:scaleX(0.8371);">PROJECTS</span>
<svg style="left:573.2px;top:323.28px" width="3" height="4" viewBox="0 0 3 4"><path d="M0.3 0.4v3.2L2.7 2z" fill="#c0c0c0"/></svg>
<span class="t" style="left:580px;top:318.38px;font-size:7.4px;color:#ececec;transform:scaleX(0.8817);">PUBLIC_ROOT</span>
<svg style="left:573.2px;top:336.3px" width="3" height="4" viewBox="0 0 3 4"><path d="M0.3 0.4v3.2L2.7 2z" fill="#c0c0c0"/></svg>
<span class="t" style="left:580px;top:331.4px;font-size:7.4px;color:#ececec;transform:scaleX(0.9106);">PUBLIC_SHOW</span>
<svg style="left:573.2px;top:349.32px" width="3" height="4" viewBox="0 0 3 4"><path d="M0.3 0.4v3.2L2.7 2z" fill="#c0c0c0"/></svg>
<span class="t" style="left:580px;top:344.42px;font-size:7.4px;color:#ececec;transform:scaleX(0.9357);">QA</span>
<div class="a" style="left:726px;top:139px;width:327px;height:216.5px;background:#25282c;"></div>
<div class="a" style="left:726px;top:139.6px;width:316.5px;height:4.0px;background:#484b4f;"></div>
<div class="a" style="left:1042.5px;top:139px;width:10.5px;height:216.5px;background:#2e3135;"></div>
<svg style="left:1045.3px;top:143.5px" width="5" height="4" viewBox="0 0 5 4"><path d="M2.5 0.4L4.7 3.6H0.3z" fill="#4c4f53"/></svg>
<svg style="left:1045.3px;top:339.5px" width="5" height="4" viewBox="0 0 5 4"><path d="M2.5 0.4L4.7 3.6H0.3z" fill="#4c4f53"/></svg>
<svg style="left:1045.3px;top:347.5px" width="5" height="4" viewBox="0 0 5 4"><path d="M2.5 3.6L4.7 0.4H0.3z" fill="#4c4f53"/></svg>
<svg style="left:716.8px;top:339.5px" width="5" height="4" viewBox="0 0 5 4"><path d="M2.5 0.4L4.7 3.6H0.3z" fill="#4c4f53"/></svg>
<div class="a" style="left:1046.6px;top:226px;width:2.4px;height:55px;background:#55585c;border-radius:1.2px;"></div>
<svg width="0" height="0" style="left:0;top:0"><defs>
<linearGradient id="gor" x1="0" y1="0" x2="1" y2="0"><stop offset="0" stop-color="#5a1c02"/><stop offset="0.18" stop-color="#c04a06"/><stop offset="0.5" stop-color="#e8720c"/><stop offset="0.85" stop-color="#c85408"/><stop offset="1" stop-color="#2a0c00"/></linearGradient>
<linearGradient id="gord" x1="0" y1="0" x2="0" y2="1"><stop offset="0.35" stop-color="#000" stop-opacity="0"/><stop offset="1" stop-color="#1a0600" stop-opacity="0.85"/></linearGradient>
<radialGradient id="gorh" cx="0.72" cy="0.25" r="0.3" gradientTransform="translate(0 0.1) scale(1 0.6)"><stop offset="0" stop-color="#fff"/><stop offset="0.45" stop-color="#ffe0b0" stop-opacity="0.9"/><stop offset="1" stop-color="#f08a20" stop-opacity="0"/></radialGradient>
<radialGradient id="glb" cx="0.5" cy="0" r="0.45"><stop offset="0" stop-color="#5a5a5a"/><stop offset="1" stop-color="#000"/></radialGradient>
<linearGradient id="gch" x1="0" y1="0" x2="1" y2="0.3"><stop offset="0" stop-color="#8a8a86"/><stop offset="0.25" stop-color="#a4a4a0"/><stop offset="0.45" stop-color="#d8d8d6"/><stop offset="1" stop-color="#e8e8e8"/></linearGradient>
<radialGradient id="grs" cx="0.5" cy="0.5" r="0.5"><stop offset="0" stop-color="#fff8a0"/><stop offset="0.35" stop-color="#ff9a30"/><stop offset="1" stop-color="#ff1500" stop-opacity="0"/></radialGradient>
<radialGradient id="gws" cx="0.5" cy="0.5" r="0.5"><stop offset="0" stop-color="#fff"/><stop offset="0.45" stop-color="#e0e0e0"/><stop offset="1" stop-color="#000" stop-opacity="0"/></radialGradient>
<linearGradient id="gg4" x1="0" y1="0" x2="0" y2="1"><stop offset="0.04" stop-color="#000"/><stop offset="0.5" stop-color="#fff"/><stop offset="0.94" stop-color="#000"/></linearGradient>
<linearGradient id="gbg" x1="0" y1="0" x2="1" y2="0"><stop offset="0" stop-color="#e0641c"/><stop offset="0.2" stop-color="#b05a14"/><stop offset="0.45" stop-color="#d88a22"/><stop offset="0.7" stop-color="#a87424"/><stop offset="1" stop-color="#8a6a28"/></linearGradient>
<linearGradient id="gbgd" x1="0" y1="0" x2="0" y2="1"><stop offset="0" stop-color="#140a00" stop-opacity="0.9"/><stop offset="0.18" stop-color="#3a2204" stop-opacity="0.25"/><stop offset="0.55" stop-color="#000" stop-opacity="0"/><stop offset="0.78" stop-color="#2a1a02" stop-opacity="0.35"/><stop offset="1" stop-color="#100800" stop-opacity="0.9"/></linearGradient>
<linearGradient id="gmp" x1="0" y1="0" x2="0" y2="1"><stop offset="0" stop-color="#b8bcae"/><stop offset="0.2" stop-color="#8e978a"/><stop offset="0.65" stop-color="#6a7268"/><stop offset="1" stop-color="#7c8078"/></linearGradient>
<filter id="tb" x="-20%" y="-20%" width="140%" height="140%"><feGaussianBlur stdDeviation="0.8"/></filter>
<filter id="tb2" x="-20%" y="-20%" width="140%" height="140%"><feGaussianBlur stdDeviation="1.6"/></filter>
</defs></svg>
<svg style="left:734px;top:143.6px" width="62.3" height="13.3" viewBox="0 49 62.300 13.3"><rect y="0" width="62.300" height="62.200" fill="#d2d2d2"/></svg>
<svg style="left:813.6px;top:143.6px" width="62.3" height="13.3" viewBox="0 49 62.300 13.3"><rect y="47" width="61" height="15.300" fill="url(#gor)"/><rect y="47" width="61" height="15.300" fill="url(#gord)"/><ellipse cx="45" cy="52.2" rx="13" ry="3.400" fill="#ffd9a0" filter="url(#tb)"/><ellipse cx="47" cy="51.8" rx="8" ry="2.200" fill="#fff" filter="url(#tb)"/><rect x="61" y="49" width="1.300" height="13.300" fill="#c8c8c8"/></svg>
<svg style="left:893px;top:143.6px" width="62.3" height="13.3" viewBox="0 49 62.300 13.3"><rect y="49" width="62.300" height="14" fill="#d2d2d2"/><rect x="15.400" y="49" width="31.400" height="14" fill="url(#glb)"/></svg>
<svg style="left:972.2px;top:143.6px" width="62.3" height="13.3" viewBox="0 49 62.300 13.3"><rect y="47" width="61" height="15.300" fill="url(#gor)"/><rect y="47" width="61" height="15.300" fill="url(#gord)"/><ellipse cx="45" cy="52.2" rx="13" ry="3.400" fill="#ffd9a0" filter="url(#tb)"/><ellipse cx="47" cy="51.8" rx="8" ry="2.200" fill="#fff" filter="url(#tb)"/><rect x="61" y="49" width="1.300" height="13.300" fill="#c8c8c8"/></svg>
<svg style="left:734px;top:184.8px" width="62.3" height="62.2" viewBox="0 0 62.300 62.2"><rect width="62.300" height="62.200" fill="#8c8c88"/>
<g filter="url(#tb)">
<path d="M0 10L10 0h28q-18 14-24 62H0z" fill="#86867f"/>
<path d="M12 6q10-3 18 2-8 8-12 20-6-8-6-22z" fill="#67635b"/>
<path d="M0 12h2.500v50H0z" fill="#d4d4d0"/>
<path d="M2 4q8-4 20-3L8 8z" fill="#b4b4ae"/>
<path d="M40 0h22.300v12q-10-3-22 2z" fill="#c6c6c2"/>
<path d="M54 0q-26 14-36 38-5 12-6 24h7q2-14 8-26 10-20 33-33z" fill="#e9e9e7"/>
<path d="M32 14q-14 16-20 48h2.200q6-30 20-46z" fill="#3a3a38"/>
<path d="M36 12q-15 18-20 50h2q5-30 20-48z" fill="#fafafa"/>
<path d="M28 42q1-14 8-24 8-8 18-8l8.300 4v18l-8 6-22 8z" fill="#ffffff"/>
<path d="M20 62q2-12 8-18l24-8q3 4 1 10l-5 16z" fill="#58544e"/>
<path d="M52 38q4-6 10.300-6v30H48q5-10 4-24z" fill="#e6eaea"/>
<path d="M30 54q3-4 8-3l-1 4q-3 0-5 2z M36 49q3-2 6-1l-1 3q-3 0-4 1z" fill="#e0e0dc"/>
<path d="M21 62q1-4 4-5 4 0 5 5z" fill="#b89886"/>
<rect x="6.500" y="33" width="7.500" height="13" rx="2.200" fill="#fafafa" transform="rotate(-5 10 40)"/>
<path d="M0 0h4L0 5z" fill="#a0a09c"/><path d="M0 5L4 0h3L0 9z" fill="#f4f4f4"/><path d="M0 9L7 0h2.500L0 12.500z" fill="#1a1a1a"/>
</g></svg>
<svg style="left:813.4px;top:184.8px" width="62.3" height="62.2" viewBox="0 0 62.300 62.2"><rect width="62.300" height="62.200" fill="#d2d2d2"/><rect y="7.400" width="62.300" height="46.200" fill="#8ec3b2"/><rect y="38.400" width="62.300" height="15.200" fill="#4d9fca"/>
<g filter="url(#tb)"><rect x="18" y="12.500" width="6" height="3" fill="#d03030"/><ellipse cx="34" cy="15.500" rx="9.500" ry="3.400" fill="#d8e060"/>
<rect x="49" y="14.500" width="10" height="7" fill="#e8d890"/><rect x="51" y="16" width="6" height="4" fill="#3a78c0"/>
<ellipse cx="6.500" cy="19" rx="3.200" ry="3.800" fill="#e8e040"/><rect x="6" y="22" width="1.200" height="20" fill="#d8a0b0"/><ellipse cx="6.500" cy="42.500" rx="2.600" ry="1.200" fill="#e07898"/>
<circle cx="16" cy="19.500" r="2.800" fill="#a88060"/>
<path d="M13 34q0-5 5-5h24q6 0 6 5l1 12H12z" fill="#f078a8"/><rect x="11.500" y="36" width="5" height="10.500" rx="2" fill="#f490b8"/><rect x="44.500" y="36" width="5" height="10.500" rx="2" fill="#f490b8"/>
<rect x="22" y="20" width="6" height="5.500" rx="2" fill="#3a2018"/><rect x="22.600" y="24" width="4.800" height="5" fill="#e8b898"/><rect x="22" y="29" width="6.500" height="11" fill="#303030"/><rect x="22.500" y="40" width="6" height="6" fill="#b04838"/>
<rect x="34" y="20.500" width="6.500" height="7" rx="2.400" fill="#f0d040"/><rect x="35" y="25" width="4.500" height="4.500" fill="#e8b898"/><rect x="34.500" y="29.500" width="6" height="10" fill="#4890d0"/><rect x="35" y="39.500" width="5.500" height="6.500" fill="#c88870"/>
<rect x="21.500" y="46" width="3" height="1.600" fill="#202020"/><rect x="26" y="46" width="3" height="1.600" fill="#202020"/><rect x="34.500" y="46" width="3" height="1.600" fill="#202020"/><rect x="39" y="46" width="3" height="1.600" fill="#202020"/></g></svg>
<svg style="left:893px;top:184.8px" width="62.3" height="62.2" viewBox="0 0 62.300 62.2"><rect width="62.300" height="62.200" fill="#fff"/><path d="M30.2 29.4L25.2 0.8M30.2 29.4L39.5 0.9M30.2 29.4L51.5 12.8M30.2 29.4L62.2 29.4M30.2 29.4L57.3 46.4M30.2 29.4L45.2 57.7M30.2 29.4L23.2 59.6M30.2 29.4L6.9 52.7M30.2 29.4L-0.8 29.4M30.2 29.4L6.1 17.1M30.2 29.4L14.1 6.5" stroke="#6e6e6e" stroke-width="0.55" fill="none"/><path d="M29.1 23.1Q30.6 24.2 32.2 23.1Q33.1 25.3 34.9 25.7Q35.1 27.7 37.2 29.4Q35.6 31.0 36.2 33.1Q34.0 33.5 33.5 35.6Q30.9 34.9 28.7 36.0Q27.5 34.3 25.1 34.5Q25.0 31.6 23.4 29.4Q25.2 28.2 24.9 26.7Q26.5 26.2 26.7 24.4Q28.3 24.8 29.1 23.1M28.4 19.1Q30.8 20.9 33.5 19.1Q34.9 22.7 37.9 23.4Q38.2 26.6 41.7 29.4Q39.1 31.9 40.0 35.5Q36.5 36.1 35.6 39.6Q31.4 38.4 27.7 40.3Q25.7 37.5 21.8 37.8Q21.7 32.9 19.0 29.4Q22.1 27.5 21.5 25.0Q24.2 24.2 24.4 21.1Q27.1 21.8 28.4 19.1M27.7 15.1Q31.0 17.6 34.8 15.1Q36.7 20.1 40.8 21.1Q41.4 25.6 46.2 29.4Q42.5 32.9 43.8 37.9Q38.9 38.8 37.7 43.5Q31.8 41.9 26.7 44.5Q24.0 40.6 18.5 41.1Q18.4 34.3 14.7 29.4Q18.9 26.7 18.2 23.3Q21.9 22.2 22.2 17.9Q25.8 18.9 27.7 15.1M27.0 11.1Q31.3 14.3 36.1 11.1Q38.6 17.4 43.8 18.8Q44.5 24.5 50.7 29.4Q45.9 33.9 47.6 40.3Q41.4 41.4 39.8 47.5Q32.3 45.4 25.7 48.7Q22.3 43.7 15.3 44.3Q15.1 35.7 10.4 29.4Q15.8 25.9 14.8 21.6Q19.6 20.2 19.9 14.7Q24.6 15.9 27.0 11.1M26.3 7.1Q31.5 11.0 37.4 7.1Q40.4 14.8 46.8 16.4Q47.6 23.4 55.2 29.4Q49.4 34.9 51.4 42.6Q43.8 44.0 41.9 51.4Q32.8 48.9 24.8 53.0Q20.5 46.9 12.0 47.6Q11.8 37.0 6.0 29.4Q12.6 25.2 11.4 19.8Q17.2 18.1 17.7 11.5Q23.4 13.0 26.3 7.1" stroke="#8c8c8c" stroke-width="0.4" fill="none"/></svg>
<svg style="left:972px;top:184.8px" width="62.3" height="62.2" viewBox="0 0 62.300 62.2"><rect width="62.300" height="62.200" fill="#d2d2d2"/><rect y="13.200" width="62.300" height="33.800" fill="#8a5a1c"/>
<g filter="url(#tb2)"><rect x="-4" y="22" width="14" height="14" fill="#e8642a"/><rect x="8" y="20" width="16" height="14" fill="#b05414"/><rect x="20" y="28" width="26" height="5" fill="#e89a30"/><rect x="30" y="30.500" width="34" height="2.600" fill="#f0c070"/><rect x="22" y="16" width="42" height="10" fill="#7a5a22"/><rect x="40" y="34" width="24" height="8" fill="#8a6420"/><rect x="0" y="36" width="40" height="8" fill="#6a4210"/></g>
<rect y="13.200" width="62.300" height="33.800" fill="url(#gbgd)"/></svg>
<div class="a" style="left:886px;top:267px;width:76.5px;height:87.8px;background:#4857ad;"></div>
<svg style="left:734px;top:274.5px" width="62.3" height="62.2" viewBox="0 0 62.300 62.2"><rect width="62.300" height="62.200" fill="#d2d2d2"/><rect x="16" y="0" width="30.700" height="31.200" fill="#fa1402"/><rect x="16" y="31.200" width="30.700" height="31" fill="#000"/>
<circle cx="31" cy="15.500" r="7" fill="url(#grs)"/><circle cx="31" cy="46.500" r="9.500" fill="url(#gws)"/></svg>
<svg style="left:813.4px;top:274.5px" width="62.3" height="62.2" viewBox="0 0 62.300 62.2"><rect width="62.300" height="62.200" fill="#d2d2d2"/><rect y="9.800" width="62.300" height="15.700" fill="#fff"/><rect x="9.600" y="13.800" width="43" height="7.700" fill="#2cc3f2"/><rect y="35.200" width="62.300" height="14.900" fill="#000"/>
<text x="9.600" y="46.200" font-family="Liberation Sans, sans-serif" font-weight="bold" font-size="8.600" fill="#fff" textLength="31.500" lengthAdjust="spacingAndGlyphs">twitter</text>
<path d="M42.600 44.800q3 1.600 6 .2 3.600-1.800 3.600-6.200l1-1.200-1.300.2.800-1.400-1.500.6q-2-1.600-3.600.6-.4.800-.2 1.800-3-.2-4.800-2.600-1 2 .8 3.400l-1-.2q.2 1.800 1.800 2.400h-1q.6 1.400 2.200 1.600-1.200 1-2.800.8z" fill="#fff"/></svg>
<svg style="left:893px;top:274.5px" width="62.3" height="62.2" viewBox="0 0 62.300 62.2"><rect width="62.300" height="62.200" fill="#d2d2d2"/><g transform="translate(0 13.800) scale(1.005 0.887)"><g>
<rect width="62" height="38" fill="#7d857c"/>
<g filter="url(#tb)">
<rect x="0" y="0" width="62" height="7.5" fill="#c9ccc4"/>
<rect x="14" y="1" width="22" height="4" fill="#e6e6e0"/>
<rect x="0" y="0" width="5.5" height="26" fill="#2f5a4c"/>
<rect x="1" y="9" width="5" height="9" fill="#2c7a50"/>
<rect x="5.5" y="4" width="9" height="9" fill="#93a09c"/>
<rect x="0" y="24" width="24" height="14" fill="#6d6660"/>
<rect x="1" y="30" width="5" height="6" fill="#b89a94"/>
<rect x="24" y="9" width="12" height="17" fill="#5c665e"/>
<rect x="24" y="26" width="14" height="12" fill="#8a8f88"/>
<rect x="50" y="6" width="12" height="20" fill="#9aa098"/>
<rect x="46" y="3" width="16" height="3" fill="#d8d8d2"/>
<rect x="52" y="26" width="10" height="12" fill="#d4d6d2"/>
<rect x="28" y="33" width="12" height="5" fill="#c4c8c4"/>
<path d="M13 12.500q3-3.500 6.500-1.500l2.500 8 1 9-2 2-8.500 1-1.500-9z" fill="#8c999c"/>
<circle cx="16.400" cy="5.800" r="3.200" fill="#6c7478"/>
<path d="M14 6.500h5v3q-2.500 1.500-5 0z" fill="#a08672"/>
<path d="M16 29.500l9-1.500 1.500 10H15z" fill="#3c3c3a"/>
<path d="M10.500 19.500L28.500 3.500l2 1.500L13 22.500z" fill="#2e3238"/>
<path d="M17 20.500q3 1 6 5l-2.500 1.500q-3-3-5.500-3.500z" fill="#a88c78"/>
<path d="M34.500 9.500q5.500-2 9.500 0l1.500 7-1.500 11.500h-10l-1.500-11z" fill="#e6e2dc"/>
<path d="M37.500 11q2.500 4 5 0l-.5 8q-2 2-4 0z" fill="#b8957c"/>
<circle cx="40.800" cy="4.800" r="3.300" fill="#4a3c32"/>
<path d="M38.300 5.500h5v3.500q-2.500 1.800-5 0z" fill="#a8846c"/>
<path d="M33 12l-3 9 2 2 3.500-7z M45 12l3 8-2.500 3-2.500-6z" fill="#b08c74"/>
<path d="M33 28h11l1 10H32z" fill="#4a5258"/>
<path d="M47.500 10.500q3.500-1.500 7 0l1.500 9-1 6 .5 12.500h-7.500l.5-12-2-7z" fill="#1a1b1d"/>
<circle cx="50.600" cy="6.600" r="2.900" fill="#e4d2bc"/>
<path d="M47.600 5q3-3 6 0l-.3 1.200h-5.400z" fill="#2a2420"/>
<path d="M53.500 16l5 6-1.500 2-5-5z" fill="#9a8270"/>
</g></g><rect width="62" height="38" fill="#10140c" opacity="0.16"/></g></svg>
<svg style="left:972px;top:274.5px" width="62.3" height="62.2" viewBox="0 0 62.300 62.2"><rect width="62.300" height="62.200" fill="url(#gg4)"/></svg>
<span class="t" style="left:746px;top:157.9px;font-size:8.7px;color:#f0f0f0;transform:scaleX(0.9968);">bartexture</span>
<span class="t" style="left:826.7px;top:157.9px;font-size:8.7px;color:#f0f0f0;transform:scaleX(0.9614);">orange2_</span>
<span class="t" style="left:898px;top:157.9px;font-size:8.7px;color:#f0f0f0;transform:scaleX(0.9886);">lightblue(1)(1)</span>
<span class="t" style="left:989.7px;top:157.9px;font-size:8.7px;color:#f0f0f0;transform:scaleX(0.9977);">orange</span>
<div class="c" style="left:730px;top:247.9px;width:69.5px;height:14px"><span class="t" style="left:1px;top:0;font-size:8.7px;color:#f0f0f0;transform:scaleX(1.0725);">chromespotlight_001</span></div>
<div class="c" style="left:810px;top:247.9px;width:68.8px;height:14px"><span class="t" style="left:0.75px;top:0;font-size:8.7px;color:#f0f0f0;transform:scaleX(0.9751);">beavis-and-butthead</span></div>
<span class="t" style="left:904px;top:247.9px;font-size:8.7px;color:#f0f0f0;transform:scaleX(0.9846);">spiderweb</span>
<span class="t" style="left:980px;top:247.9px;font-size:8.7px;color:#f0f0f0;transform:scaleX(0.9157);">BGasdasdad</span>
<span class="t" style="left:731.4px;top:338.0px;font-size:8.7px;color:#f0f0f0;transform:scaleX(0.9662);">redstar128x128(1)</span>
<span class="t" style="left:811.5px;top:338.0px;font-size:8.7px;color:#f0f0f0;transform:scaleX(1.0061);">smalltwitter_logo</span>
<div class="c" style="left:889px;top:338.0px;width:69.4px;height:14px"><span class="t" style="left:1.4px;top:0;font-size:8.7px;color:#ffffff;transform:scaleX(0.9800);">1299006311maroon</span></div>
<span class="t" style="left:977.4px;top:338.0px;font-size:8.7px;color:#f0f0f0;transform:scaleX(0.9983);">gradient04(1)</span>
<div class="a" style="left:541px;top:355.5px;width:525px;height:1.0px;background:#2a2c30;"></div>
<span class="t" style="left:560.4px;top:382.3px;font-size:8.7px;color:#ececec;transform:scaleX(0.9896);">Position</span>
<span class="t" style="left:661px;top:382.6px;font-size:8.7px;color:#ececec;transform:scaleX(0.9660);">X</span>
<span class="t" style="left:798.6px;top:382.6px;font-size:8.7px;color:#ececec;transform:scaleX(0.9315);">Y</span>
<div class="a" style="left:671px;top:381.5px;width:49.6px;height:14.6px;background:#1d1f22;border:1px solid #101113;border-radius:1.5px;"></div>
<span class="t" style="left:697.5px;top:381.7px;font-size:7.4px;color:#f0f0f0;transform:scaleX(0.9798);">0.00</span>
<svg style="left:714.3px;top:384.6px" width="4" height="9" viewBox="0 0 4 9"><path d="M2 0.6L3.6 2.8H0.4z M2 8.4L3.6 6.2H0.4z" fill="#55585c"/></svg>
<div class="a" style="left:808.5px;top:381.5px;width:49.6px;height:14.6px;background:#1d1f22;border:1px solid #101113;border-radius:1.5px;"></div>
<span class="t" style="left:835.0px;top:381.7px;font-size:7.4px;color:#f0f0f0;transform:scaleX(0.9798);">0.00</span>
<svg style="left:851.8px;top:384.6px" width="4" height="9" viewBox="0 0 4 9"><path d="M2 0.6L3.6 2.8H0.4z M2 8.4L3.6 6.2H0.4z" fill="#55585c"/></svg>
<span class="t" style="left:560.4px;top:406.9px;font-size:8.7px;color:#ececec;transform:scaleX(0.9474);">Scaling</span>
<span class="t" style="left:661px;top:407.2px;font-size:8.7px;color:#ececec;transform:scaleX(0.9660);">X</span>
<span class="t" style="left:798.6px;top:407.2px;font-size:8.7px;color:#ececec;transform:scaleX(0.9315);">Y</span>
<div class="a" style="left:671px;top:406.09999999999997px;width:49.6px;height:14.6px;background:#1d1f22;border:1px solid #101113;border-radius:1.5px;"></div>
<span class="t" style="left:697.5px;top:406.3px;font-size:7.4px;color:#f0f0f0;transform:scaleX(0.9798);">3.91</span>
<svg style="left:714.3px;top:409.2px" width="4" height="9" viewBox="0 0 4 9"><path d="M2 0.6L3.6 2.8H0.4z M2 8.4L3.6 6.2H0.4z" fill="#55585c"/></svg>
<div class="a" style="left:808.5px;top:406.09999999999997px;width:49.6px;height:14.6px;background:#1d1f22;border:1px solid #101113;border-radius:1.5px;"></div>
<span class="t" style="left:835.0px;top:406.3px;font-size:7.4px;color:#f0f0f0;transform:scaleX(0.9798);">3.91</span>
<svg style="left:851.8px;top:409.2px" width="4" height="9" viewBox="0 0 4 9"><path d="M2 0.6L3.6 2.8H0.4z M2 8.4L3.6 6.2H0.4z" fill="#55585c"/></svg>
<div class="a" style="left:897px;top:406px;width:62px;height:15px;background:#505357;border-radius:2px;"></div>
<span class="t" style="left:901.5px;top:406.7px;font-size:7.4px;color:#f0f0f0;transform:scaleX(0.9783);">Single</span>
<svg style="left:949px;top:409px" width="4" height="9" viewBox="0 0 4 9"><path d="M2 0.8L3.7 3.2H0.3z M2 8.2L3.7 5.8H0.3z" fill="#e0e0e0"/></svg>
<span class="t" style="left:560.4px;top:432.3px;font-size:8.7px;color:#ececec;transform:scaleX(0.9935);">Image</span>
<div class="a" style="left:622.6px;top:431.5px;width:411.7px;height:14.7px;background:#1d1f22;border:1px solid #101113;border-radius:1.5px;"></div>
<span class="t" style="left:627px;top:432.5px;font-size:7.4px;color:#f0f0f0;transform:scaleX(0.9699);">IMAGE*/QA/MusicPack/products/MCP/Packages/Music_demo/CONCEPT=SD/1299006311_maroon_5_-_never_gonna_leave_</span>
<span class="t" style="left:560.5px;top:462.0px;font-size:10.5px;color:#ececec;-webkit-text-stroke:0.08px currentColor;transform:scaleX(0.9468);">Get content dynamically</span>
<div class="a" style="left:561px;top:480.3px;width:482.5px;height:40.0px;background:transparent;border:1.6px solid #5a5d61;border-radius:2px;"></div>
<svg style="left:569.8px;top:488.0px" width="10" height="10" viewBox="0 0 10 10"><circle cx="5" cy="5" r="4.6" fill="#ececec"/><path d="M2.7 5.1l1.6 1.7 3-3.3" fill="none" stroke="#36393e" stroke-width="1.3"/></svg>
<span class="t" style="left:587.4px;top:485.7px;font-size:9.9px;color:#f2f2f2;-webkit-text-stroke:0.08px currentColor;transform:scaleX(1.0042);">Set query from playlist metadata</span>
<span class="t" style="left:587.4px;top:497.3px;font-size:7.4px;color:#9c9fa3;transform:scaleX(1.0129);">Configure a query to dynamically fetch content to be presented in the page</span>
<svg style="left:1021px;top:495.8px" width="11" height="7" viewBox="0 0 11 7"><path d="M1.4 1.4l4.1 4 4.1-4" fill="none" stroke="#e0e0e0" stroke-width="1.2"/></svg>
<div class="a" style="left:561px;top:527.5px;width:482.5px;height:39.8px;background:transparent;border:1.6px solid #5a5d61;border-radius:2px;"></div>
<svg style="left:569.8px;top:535.2px" width="10" height="10" viewBox="0 0 10 10"><circle cx="5" cy="5" r="4.6" fill="#ececec"/><path d="M2.7 5.1l1.6 1.7 3-3.3" fill="none" stroke="#36393e" stroke-width="1.3"/></svg>
<span class="t" style="left:587.4px;top:532.9px;font-size:9.9px;color:#f2f2f2;-webkit-text-stroke:0.08px currentColor;transform:scaleX(0.9858);">Set query from database</span>
<span class="t" style="left:587.4px;top:544.5px;font-size:7.4px;color:#9c9fa3;transform:scaleX(1.0129);">Configure a query to dynamically fetch content to be presented in the page</span>
<svg style="left:1021px;top:543.0px" width="11" height="7" viewBox="0 0 11 7"><path d="M1.4 1.4l4.1 4 4.1-4" fill="none" stroke="#e0e0e0" stroke-width="1.2"/></svg>
<div class="a" style="left:136px;top:641.6px;width:930px;height:1.0px;background:#1b1d20;"></div>
<div class="a" style="left:143.5px;top:652px;width:112.8px;height:14.8px;background:#55585c;border-radius:2px;"></div>
<span class="t" style="left:158.75px;top:652.8px;font-size:7.4px;color:#f4f4f4;transform:scaleX(0.9881);">Clear all dynamic queries</span>
<div class="a" style="left:954px;top:652px;width:53px;height:14.8px;background:#55585c;border-radius:2px;"></div>
<span class="t" style="left:969.5px;top:652.8px;font-size:7.4px;color:#f4f4f4;transform:scaleX(0.9667);">Cancel</span>
<div class="a" style="left:1012px;top:652px;width:46.2px;height:14.8px;background:#5b6ee8;border-radius:2px;"></div>
<span class="t" style="left:1027.5px;top:652.8px;font-size:7.4px;color:#ffffff;transform:scaleX(0.8897);">Save</span>
</body></html>
